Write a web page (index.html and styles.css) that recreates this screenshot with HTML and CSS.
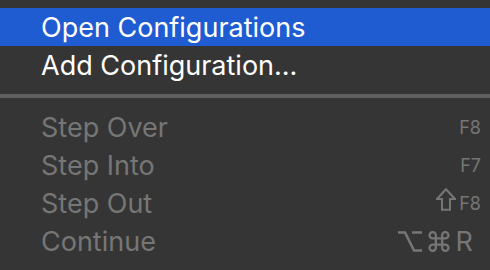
FILE: index.html
```html
<!DOCTYPE html>
<html lang="en">
<head>
    <meta charset="UTF-8">
    <title>Run Menu</title>
    <link rel="stylesheet" href="styles.css">
</head>
<body>
    <div class="menu">
        <div class="item selected"><span class="label">Open Configurations</span></div>
        <div class="item"><span class="label">Add Configuration...</span></div>
        <div class="divider"></div>
        <div class="item disabled"><span class="label">Step Over</span><span class="key">F8</span></div>
        <div class="item disabled"><span class="label">Step Into</span><span class="key">F7</span></div>
        <div class="item disabled">
            <span class="label">Step Out</span>
            <span class="key">
                <svg class="shift" width="20" height="23" viewBox="0 0 20 23" aria-label="⇧">
                    <path d="M10 1.2L19 11H14V21.8H6V11H1Z" fill="none" stroke="currentColor" stroke-width="2" stroke-linejoin="miter"/>
                </svg>F8
            </span>
        </div>
        <div class="item disabled">
            <span class="label">Continue</span>
            <span class="key big">
                <svg class="opt" width="24" height="21" viewBox="0 0 24 21" aria-label="⌥">
                    <path d="M0 1.5H7L16 19.5H24M14 1.5H24" fill="none" stroke="currentColor" stroke-width="2.6"/>
                </svg>
                <svg class="cmd" width="22" height="21" viewBox="2 2 20 20" aria-label="⌘">
                    <path d="M15 6v12a3 3 0 1 0 3-3H6a3 3 0 1 0 3 3V6a3 3 0 1 0-3 3h12a3 3 0 1 0-3-3" fill="none" stroke="currentColor" stroke-width="2.2"/>
                </svg>R
            </span>
        </div>
    </div>
</body>
</html>
```

FILE: styles.css
```css
* {
    margin: 0;
    padding: 0;
    box-sizing: border-box;
}

body {
    background: #353535;
    font-family: Inter, 'Noto Sans', sans-serif;
}

.menu {
    padding-top: 8px;
    width: 490px;
    height: 270px;
}

.item {
    display: flex;
    justify-content: space-between;
    align-items: center;
    height: 38px;
    padding: 0 9px 0 41px;
    color: #ffffff;
    font-size: 27px;
}

.selected {
    background: #1f5bd1;
}

.divider {
    height: 4px;
    margin: 10px 0;
    background: #5e5e5e;
}

.disabled {
    color: #767676;
}

.key {
    display: flex;
    align-items: center;
    font-size: 18px;
}

.key.big {
    font-size: 27px;
    margin-right: 8px;
}

.shift {
    margin-right: 3px;
    margin-top: -8px;
}

.opt {
    margin-right: 6px;
}

.cmd {
    margin-right: 6px;
}
```
